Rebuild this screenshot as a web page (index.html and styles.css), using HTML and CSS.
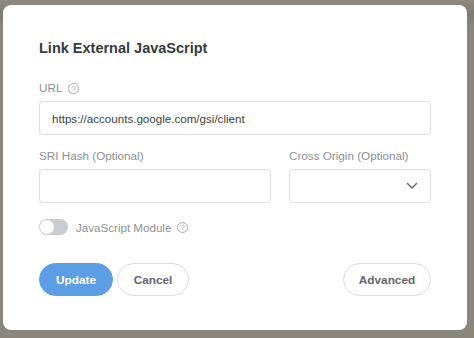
FILE: index.html
```html
<!DOCTYPE html>
<html>
<head>
<meta charset="utf-8">
<link rel="stylesheet" href="styles.css">
</head>
<body>
<div class="backdrop">
  <div class="dialog">
    <h2 class="title">Link External JavaScript</h2>
    <div class="field">
      <label class="label">URL <span class="help">?</span></label>
      <div class="input">https://accounts.google.com/gsi/client</div>
    </div>
    <div class="row">
      <div class="field grow">
        <label class="label">SRI Hash (Optional)</label>
        <div class="input"></div>
      </div>
      <div class="field side">
        <label class="label">Cross Origin (Optional)</label>
        <div class="input select">
          <svg width="12" height="8" viewBox="0 0 12 8"><path d="M1.5 1.5 L6 6 L10.5 1.5" fill="none" stroke="#6a6e74" stroke-width="1.5" stroke-linecap="round" stroke-linejoin="round"/></svg>
        </div>
      </div>
    </div>
    <div class="toggle-row">
      <span class="toggle"><span class="knob"></span></span>
      <span class="toggle-label">JavaScript Module</span>
      <span class="help">?</span>
    </div>
    <div class="actions">
      <button class="btn primary">Update</button>
      <button class="btn cancel">Cancel</button>
      <span class="spacer"></span>
      <button class="btn advanced">Advanced</button>
    </div>
  </div>
</div>
</body>
</html>
```
FILE: styles.css
```css
html, body {
  margin: 0;
  padding: 0;
  height: 100%;
}
body {
  font-family: "Liberation Sans", Arial, sans-serif;
  background: #8a867c;
  overflow: hidden;
}
.backdrop {
  width: 474px;
  height: 338px;
  box-sizing: border-box;
  padding: 5px 7px 8px 3px;
  background:
    linear-gradient(180deg, #8f8b80 0%, #7e7b72 4%, #8a867c 8%, #8a867c 100%);
}
.dialog {
  background: #fff;
  border-radius: 8px;
  height: 325px;
  box-sizing: border-box;
  padding: 34px 36px 0 36px;
}
.title {
  margin: 0 0 23px 0;
  font-size: 14.5px;
  font-weight: bold;
  color: #343a42;
  line-height: 18px;
}
.field {
  display: flex;
  flex-direction: column;
}
.label {
  font-size: 11.7px;
  color: #8c9096;
  line-height: 16px;
  margin-bottom: 5px;
  display: flex;
  align-items: center;
  gap: 6px;
}
.help {
  display: inline-flex;
  width: 9px;
  height: 9px;
  border: 1px solid #a6aab0;
  border-radius: 50%;
  font-size: 7.5px;
  line-height: 9px;
  color: #9ea2a8;
  align-items: center;
  justify-content: center;
}
.input {
  height: 34px;
  box-sizing: border-box;
  border: 1px solid #dcdee1;
  border-radius: 4px;
  padding: 0 12px;
  font-size: 11.6px;
  color: #3a3f45;
  display: flex;
  align-items: center;
}
.row {
  display: flex;
  gap: 18px;
  margin-top: 13px;
}
.grow { flex: 1; }
.side { width: 142px; }
.select { justify-content: flex-end; padding-right: 12px; }
.toggle-row {
  display: flex;
  align-items: center;
  margin-top: 16px;
  gap: 6px;
}
.toggle {
  width: 29px;
  height: 16px;
  border-radius: 8px;
  background: #c9ccd1;
  position: relative;
  margin-right: 2px;
}
.knob {
  position: absolute;
  left: 1px;
  top: 1px;
  width: 14px;
  height: 14px;
  border-radius: 50%;
  background: #fff;
}
.toggle-label {
  font-size: 11.6px;
  color: #8c9096;
}
.actions {
  display: flex;
  align-items: center;
  margin-top: 28px;
  gap: 4px;
}
.spacer { flex: 1; }
.btn {
  height: 33px;
  border-radius: 17px;
  border: 1px solid #d9dbde;
  background: #fff;
  font-family: "Liberation Sans", Arial, sans-serif;
  font-size: 11.8px;
  font-weight: bold;
  color: #62666c;
  padding: 0;
  box-sizing: border-box;
}
.btn.primary {
  background: #5c9de6;
  border-color: #5c9de6;
  color: #fff;
  width: 74px;
}
.btn.cancel { width: 72px; }
.btn.advanced { width: 88px; }
```
